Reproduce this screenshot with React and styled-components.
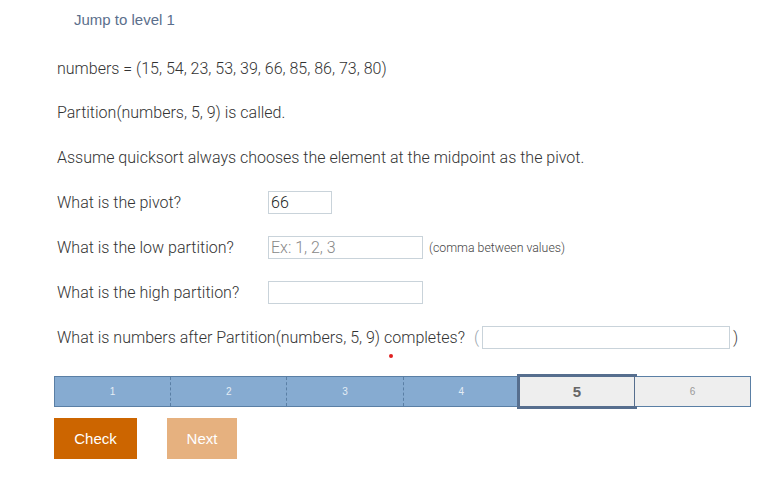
import styled, { createGlobalStyle } from "styled-components";

const GlobalStyle = createGlobalStyle`
  html, body {
    margin: 0;
    padding: 0;
    background: #fff;
  }
  body {
    font-family: Roboto, "Liberation Sans", sans-serif;
    font-weight: 300;
    color: #333;
  }
`;

const levels = [1, 2, 3, 4, 5, 6];
const current = 5;

const App = () => {
  return (
    <Page>
      <GlobalStyle />
      <JumpLink>Jump to level 1</JumpLink>
      <Body>
        <Line>numbers = (15, 54, 23, 53, 39, 66, 85, 86, 73, 80)</Line>
        <Line>Partition(numbers, 5, 9) is called.</Line>
        <Line>Assume quicksort always chooses the element at the midpoint as the pivot.</Line>
        <Question>
          <Label>What is the pivot?</Label>
          <Field $width={64} defaultValue="66" />
        </Question>
        <Question>
          <Label>What is the low partition?</Label>
          <Field $width={155} placeholder="Ex: 1, 2, 3" />
          <Hint>(comma between values)</Hint>
        </Question>
        <Question>
          <Label>What is the high partition?</Label>
          <Field $width={155} />
        </Question>
        <Question>
          <span>What is numbers after Partition(numbers, 5, 9) completes?</span>
          <Paren $open>(</Paren>
          <Field $width={248} />
          <Paren>)</Paren>
          <RedDot />
        </Question>
        <Progress>
          {levels.map((n) => (
            <Step key={n} $done={n < current} $active={n === current} $lastDone={n === current - 1}>
              {n}
            </Step>
          ))}
        </Progress>
        <Buttons>
          <Button>Check</Button>
          <Button $muted>Next</Button>
        </Buttons>
      </Body>
    </Page>
  );
};

export default App;

const Page = styled.div`
  width: 772px;
  height: 488px;
  padding-top: 11px;
  box-sizing: border-box;
`;

const JumpLink = styled.div`
  margin-left: 74px;
  font-size: 15px;
  font-weight: 400;
  color: #5b6f8c;
  font-family: "Liberation Sans", Arial, sans-serif;
  height: 20px;
`;

const Body = styled.div`
  padding: 0 21px 0 54px;
  display: flex;
  flex-direction: column;
`;

const Line = styled.p`
  margin: 0;
  padding-left: 3px;
  font-size: 16px;
  line-height: 20px;
  &:nth-child(1) { margin-top: 28px; }
  &:nth-child(2) { margin-top: 24px; }
  &:nth-child(3) { margin-top: 25px; }
`;

const Question = styled.div`
  position: relative;
  display: flex;
  align-items: center;
  padding-left: 3px;
  height: 23px;
  margin-top: 22px;
  font-size: 16px;
  &:nth-of-type(1) { margin-top: 23px; }
`;

const Label = styled.span`
  width: 211px;
`;

const Field = styled.input`
  width: ${(p) => p.$width}px;
  height: 23px;
  box-sizing: border-box;
  border: 1px solid #c9d3da;
  padding: 0 2px;
  font-family: Roboto, "Liberation Sans", sans-serif;
  font-weight: 300;
  font-size: 16px;
  color: #222;
  outline: none;
  &::placeholder {
    color: #888;
  }
`;

const Hint = styled.span`
  margin-left: 6px;
  font-size: 12.3px;
  font-weight: 300;
  color: #444;
`;

const Paren = styled.span`
  margin: ${(p) => (p.$open ? "0 3px 0 9px" : "0 0 0 3px")};
  color: ${(p) => (p.$open ? "#9aa5ae" : "#444")};
`;

const RedDot = styled.span`
  position: absolute;
  left: 335px;
  top: 28px;
  width: 4px;
  height: 4px;
  border-radius: 50%;
  background: #e02020;
`;

const Progress = styled.div`
  display: flex;
  margin-top: 27px;
  height: 31px;
  border: 1px solid #5a7fa5;
  box-sizing: border-box;
  width: 697px;
  background: #eee;
`;

const Step = styled.div`
  flex: 1 1 0;
  box-sizing: border-box;
  display: flex;
  align-items: center;
  justify-content: center;
  font-family: "Liberation Sans", Arial, sans-serif;
  font-weight: 400;
  font-size: 10px;
  background: ${(p) => (p.$done ? "#86abd1" : "#eeeeee")};
  color: ${(p) => (p.$done ? "#e4edf5" : "#999")};
  border-right: ${(p) => (p.$done && !p.$lastDone ? "1px dashed #5a7fa5" : "none")};
  ${(p) =>
    p.$active &&
    `
    flex: 0 0 120px;
    margin: -3px -2px;
    border: 3px solid #566e8e;
    font-size: 15px;
    font-weight: 700;
    color: #666;
  `}
`;

const Buttons = styled.div`
  display: flex;
  gap: 30px;
  margin-top: 11px;
`;

const Button = styled.button`
  height: 41px;
  padding: 0 ${(p) => (p.$muted ? "19px" : "20px")};
  min-width: ${(p) => (p.$muted ? "70px" : "83px")};
  border: none;
  font-family: "Liberation Sans", Arial, sans-serif;
  font-size: 15px;
  color: #fff;
  background: ${(p) => (p.$muted ? "#e6b17f" : "#cc6500")};
  cursor: pointer;
`;
